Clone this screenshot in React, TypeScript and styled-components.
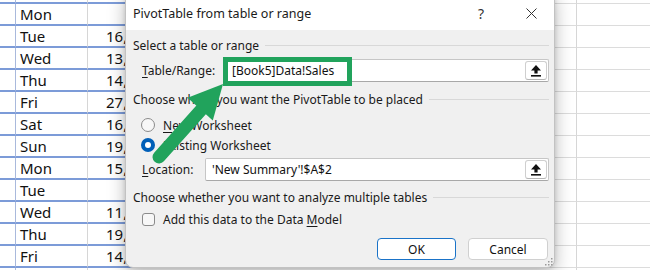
import React from "react";
import styled, { createGlobalStyle } from "styled-components";

const Global = createGlobalStyle`
  html, body { margin: 0; padding: 0; background: #fff; overflow: hidden; }
  #root { width: 650px; height: 270px; }
`;

const Stage = styled.div`
  position: relative;
  width: 650px;
  height: 270px;
  overflow: hidden;
  background: #fff;
`;

/* ---------- spreadsheet ---------- */
const Sheet = styled.div`
  display: flex;
  flex-direction: column;
  font-family: "Noto Sans", "Open Sans", sans-serif;
  font-size: 15px;
  color: #111;
`;

const Row = styled.div<{ $h: number }>`
  display: grid;
  grid-template-columns: 16px 72px 212px 277px 73px;
  height: ${(p) => p.$h}px;
`;

type Kind = "a" | "day" | "num" | "gap" | "last";

const Cell = styled.div<{ $kind: Kind }>`
  box-sizing: border-box;
  overflow: hidden;
  white-space: nowrap;
  display: flex;
  align-items: center;
  border-bottom: ${(p) =>
    p.$kind === "gap" || p.$kind === "last" ? "1px solid #dcdcdc" : "2px solid #7c9bd8"};
  border-right: ${(p) =>
    p.$kind === "a"
      ? "1px solid #a9b9dc"
      : p.$kind === "day" || p.$kind === "gap"
      ? "1px solid #d6d6d6"
      : "none"};
  padding-left: ${(p) => (p.$kind === "day" ? "4px" : p.$kind === "num" ? "18px" : "0")};
`;

/* ---------- dialog ---------- */
const Dialog = styled.div`
  position: absolute;
  left: 125px;
  top: -10px;
  width: 430px;
  height: 278px;
  box-sizing: border-box;
  background: #f0f0f0;
  border: 1px solid #c2c2c2;
  border-radius: 8px;
  box-shadow: 0 6px 18px rgba(0, 0, 0, 0.28), 0 0 4px rgba(0, 0, 0, 0.12);
  display: flex;
  flex-direction: column;
  font-family: "Noto Sans", "Open Sans", sans-serif;
  font-size: 12px;
  color: #1a1a1a;
`;

const TitleBar = styled.div`
  height: 39px;
  box-sizing: border-box;
  padding: 9px 0 4px 7px;
  background: #fff;
  border-radius: 8px 8px 0 0;
  display: flex;
  align-items: center;
`;

const Title = styled.div`
  flex: 1;
  font-size: 12.5px;
  color: #1a1a1a;
`;

const TitleButton = styled.div<{ $mr?: number }>`
  width: 46px;
  height: 26px;
  margin-right: ${(p) => p.$mr ?? 0}px;
  display: flex;
  align-items: center;
  justify-content: center;
  font-size: 14px;
  color: #333;
`;

const Body = styled.div`
  flex: 1;
  display: flex;
  flex-direction: column;
  padding: 7px 5px 7px 7px;
`;

const GroupHeader = styled.div<{ $mt?: number }>`
  display: flex;
  align-items: center;
  gap: 6px;
  height: 16px;
  margin-top: ${(p) => p.$mt ?? 0}px;
  white-space: nowrap;
  &::after {
    content: "";
    flex: 1;
    height: 1px;
    background: #d8d8d8;
  }
`;

const FieldRow = styled.div<{ $mt: number }>`
  display: flex;
  align-items: center;
  height: 23px;
  margin-top: ${(p) => p.$mt}px;
  padding-left: 9px;
`;

const FieldLabel = styled.div<{ $w: number }>`
  width: ${(p) => p.$w}px;
  flex: none;
  white-space: nowrap;
`;

const Key = styled.span`
  text-decoration: underline;
  text-underline-offset: 2px;
`;

const Input = styled.div`
  position: relative;
  flex: 1;
  height: 23px;
  box-sizing: border-box;
  background: #fff;
  border: 1px solid #c6c6c6;
  border-bottom-color: #a8a8a8;
  border-radius: 2px;
  display: flex;
  align-items: center;
  padding-left: 6px;
  color: #111;
`;

const InputText = styled.div`
  flex: 1;
  white-space: nowrap;
`;

const UploadButton = styled.div`
  width: 22px;
  height: 19px;
  margin-right: 1px;
  box-sizing: border-box;
  border: 1px solid #cfcfcf;
  border-bottom-color: #b5b5b5;
  border-radius: 3px;
  background: #fff;
  display: flex;
  align-items: center;
  justify-content: center;
`;

const Highlight = styled.div`
  position: absolute;
  left: -3px;
  top: -3px;
  width: 129px;
  height: 29px;
  box-sizing: border-box;
  border: 5px solid #21a35c;
  pointer-events: none;
`;

const OptionRow = styled.div<{ $mt?: number; $pl: number }>`
  display: flex;
  align-items: center;
  gap: 8px;
  height: 20px;
  margin-top: ${(p) => p.$mt ?? 0}px;
  padding-left: ${(p) => p.$pl}px;
  white-space: nowrap;
`;

const Radio = styled.div<{ $on?: boolean }>`
  width: 14px;
  height: 14px;
  box-sizing: border-box;
  border-radius: 50%;
  flex: none;
  display: flex;
  align-items: center;
  justify-content: center;
  background: ${(p) => (p.$on ? "#005fb8" : "#f7f7f7")};
  border: ${(p) => (p.$on ? "none" : "1px solid #8b8b8b")};
  &::after {
    content: "";
    display: ${(p) => (p.$on ? "block" : "none")};
    width: 6px;
    height: 6px;
    border-radius: 50%;
    background: #fff;
  }
`;

const Check = styled.div`
  width: 13px;
  height: 13px;
  box-sizing: border-box;
  border: 1px solid #8b8b8b;
  border-radius: 3px;
  background: #f7f7f7;
  flex: none;
`;

const ButtonRow = styled.div`
  margin-top: auto;
  display: flex;
  justify-content: flex-end;
  gap: 12px;
  padding-right: 1px;
`;

const Button = styled.div<{ $primary?: boolean; $w: number }>`
  width: ${(p) => p.$w}px;
  height: 22px;
  box-sizing: border-box;
  background: #fff;
  border-radius: 4px;
  border: ${(p) => (p.$primary ? "1.5px solid #1a73c8" : "1px solid #d0d0d0")};
  display: flex;
  align-items: center;
  justify-content: center;
  color: #111;
`;

const Grip = styled.svg`
  position: absolute;
  right: 1px;
  bottom: 1px;
`;

const ArrowLayer = styled.svg`
  position: absolute;
  left: 0;
  top: 0;
  pointer-events: none;
`;

const rows: [string, string][] = [
  ["Mon", ""],
  ["Tue", "16,482"],
  ["Wed", "13,905"],
  ["Thu", "14,236"],
  ["Fri", "27,118"],
  ["Sat", "16,574"],
  ["Sun", "19,340"],
  ["Mon", "15,762"],
  ["Tue", ""],
  ["Wed", "11,829"],
  ["Thu", "19,053"],
  ["Fri", "14,617"],
  ["", ""],
];

const UploadIcon = () => (
  <svg width="12" height="13" viewBox="0 0 12 13">
    <polygon points="6,1 11,6.5 7.6,6.5 7.6,9.5 4.4,9.5 4.4,6.5 1,6.5" fill="#111" />
    <rect x="1" y="11" width="10" height="1.6" fill="#111" />
  </svg>
);

export default function App() {
  return (
    <Stage>
      <Global />
      <Sheet>
        <Row $h={4}>
          <Cell $kind="a" />
          <Cell $kind="day" />
          <Cell $kind="num" />
          <Cell $kind="gap" />
          <Cell $kind="last" />
        </Row>
        {rows.map(([d, n], i) => (
          <Row $h={22} key={i}>
            <Cell $kind="a" />
            <Cell $kind="day">{d}</Cell>
            <Cell $kind="num">{n}</Cell>
            <Cell $kind="gap" />
            <Cell $kind="last" />
          </Row>
        ))}
      </Sheet>

      <Dialog>
        <TitleBar>
          <Title>PivotTable from table or range</Title>
          <TitleButton $mr={4}>?</TitleButton>
          <TitleButton>
            <svg width="11" height="11" viewBox="0 0 11 11">
              <path d="M0.5 0.5 L10.5 10.5 M10.5 0.5 L0.5 10.5" stroke="#333" strokeWidth="1" />
            </svg>
          </TitleButton>
        </TitleBar>
        <Body>
          <GroupHeader>Select a table or range</GroupHeader>
          <FieldRow $mt={6}>
            <FieldLabel $w={83}>
              <Key>T</Key>able/Range:
            </FieldLabel>
            <Input>
              <InputText>[Book5]Data!Sales</InputText>
              <UploadButton>
                <UploadIcon />
              </UploadButton>
              <Highlight />
            </Input>
          </FieldRow>
          <GroupHeader $mt={9}>Choose where you want the PivotTable to be placed</GroupHeader>
          <OptionRow $mt={8} $pl={8}>
            <Radio />
            <span>
              <Key>N</Key>ew Worksheet
            </span>
          </OptionRow>
          <OptionRow $pl={8}>
            <Radio $on />
            <span>
              <Key>E</Key>xisting Worksheet
            </span>
          </OptionRow>
          <FieldRow $mt={3}>
            <FieldLabel $w={63}>
              <Key>L</Key>ocation:
            </FieldLabel>
            <Input>
              <InputText>'New Summary'!$A$2</InputText>
              <UploadButton>
                <UploadIcon />
              </UploadButton>
            </Input>
          </FieldRow>
          <GroupHeader $mt={8}>Choose whether you want to analyze multiple tables</GroupHeader>
          <OptionRow $mt={4} $pl={9}>
            <Check />
            <span>
              Add this data to the Data <Key>M</Key>odel
            </span>
          </OptionRow>
          <ButtonRow>
            <Button $primary $w={79}>OK</Button>
            <Button $w={80}>Cancel</Button>
          </ButtonRow>
        </Body>
        <Grip width="8" height="8" viewBox="0 0 8 8">
          <rect x="6" y="0" width="1.5" height="1.5" fill="#9a9a9a" />
          <rect x="3" y="3" width="1.5" height="1.5" fill="#9a9a9a" />
          <rect x="6" y="3" width="1.5" height="1.5" fill="#9a9a9a" />
          <rect x="0" y="6" width="1.5" height="1.5" fill="#9a9a9a" />
          <rect x="3" y="6" width="1.5" height="1.5" fill="#9a9a9a" />
          <rect x="6" y="6" width="1.5" height="1.5" fill="#9a9a9a" />
        </Grip>
      </Dialog>

      <ArrowLayer width="650" height="270" viewBox="0 0 650 270">
        <line x1="159" y1="157" x2="201" y2="110" stroke="#21a35c" strokeWidth="13" strokeLinecap="round" />
        <polygon points="223,84 212.8,120.6 187.6,97.8" fill="#21a35c" />
      </ArrowLayer>
    </Stage>
  );
}
